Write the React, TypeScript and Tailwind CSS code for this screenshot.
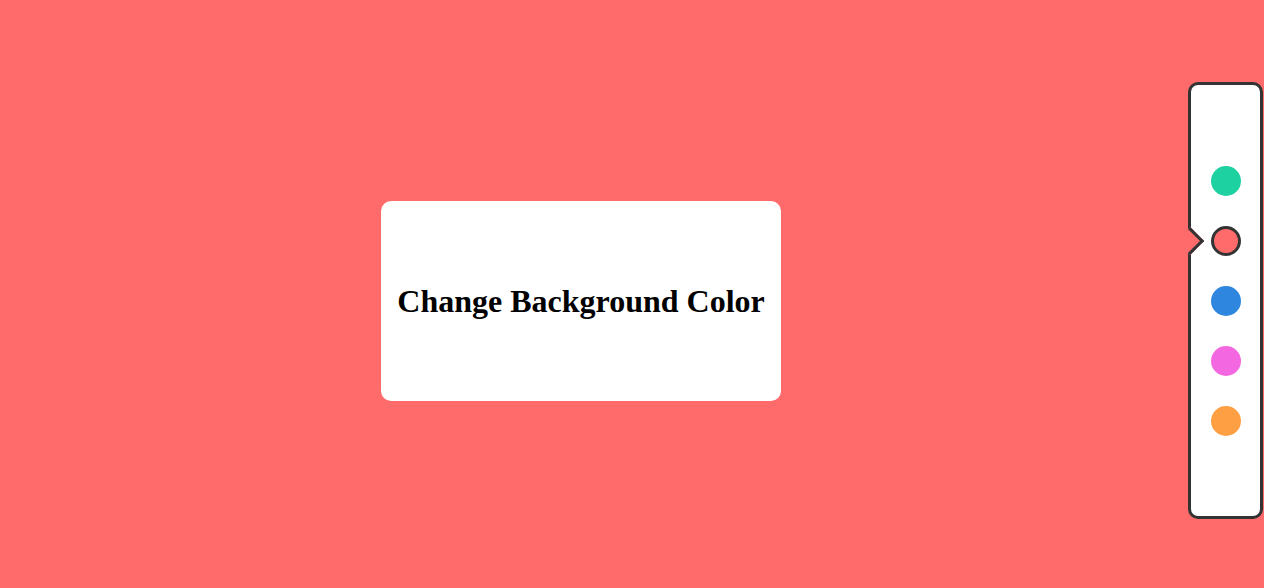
const colors = [
  { name: 'green', cls: 'bg-[#1dd1a1]' },
  { name: 'red', cls: 'bg-[#ff6b6b]', active: true },
  { name: 'blue', cls: 'bg-[#2e86de]' },
  { name: 'pink', cls: 'bg-[#f368e0]' },
  { name: 'orange', cls: 'bg-[#ff9f43]' },
]

export default function App() {
  return (
    <div className="flex h-[588px] w-full overflow-hidden bg-[#ff6b6b]">
      <main className="flex w-[1162px] shrink-0 items-center justify-center pt-[14px]">
        <div className="flex h-[200px] w-[400px] items-center justify-center rounded-[10px] bg-white">
          <h1 className="text-[32px] font-bold text-black [font-family:'Liberation_Serif','Times_New_Roman',serif]">
            Change Background Color
          </h1>
        </div>
      </main>

      <aside className="relative ml-[26px] mt-[82px] flex h-[437px] w-[75px] shrink-0 flex-col justify-center gap-[30px] rounded-[10px] border-[3px] border-[#333] bg-white pt-[1px]">
        {colors.map((c) => (
          <div key={c.name} className="relative flex h-[30px] w-full justify-center">
            {c.active && (
              <span className="absolute left-[-11.5px] top-[5px] h-[20px] w-[20px] rotate-45 border-r-[3px] border-t-[3px] border-[#333] bg-[#ff6b6b]" />
            )}
            <button
              aria-label={c.name}
              className={`h-[30px] w-[30px] rounded-full ${c.cls} ${c.active ? 'border-[3px] border-[#333]' : ''}`}
            />
          </div>
        ))}
      </aside>
    </div>
  )
}
